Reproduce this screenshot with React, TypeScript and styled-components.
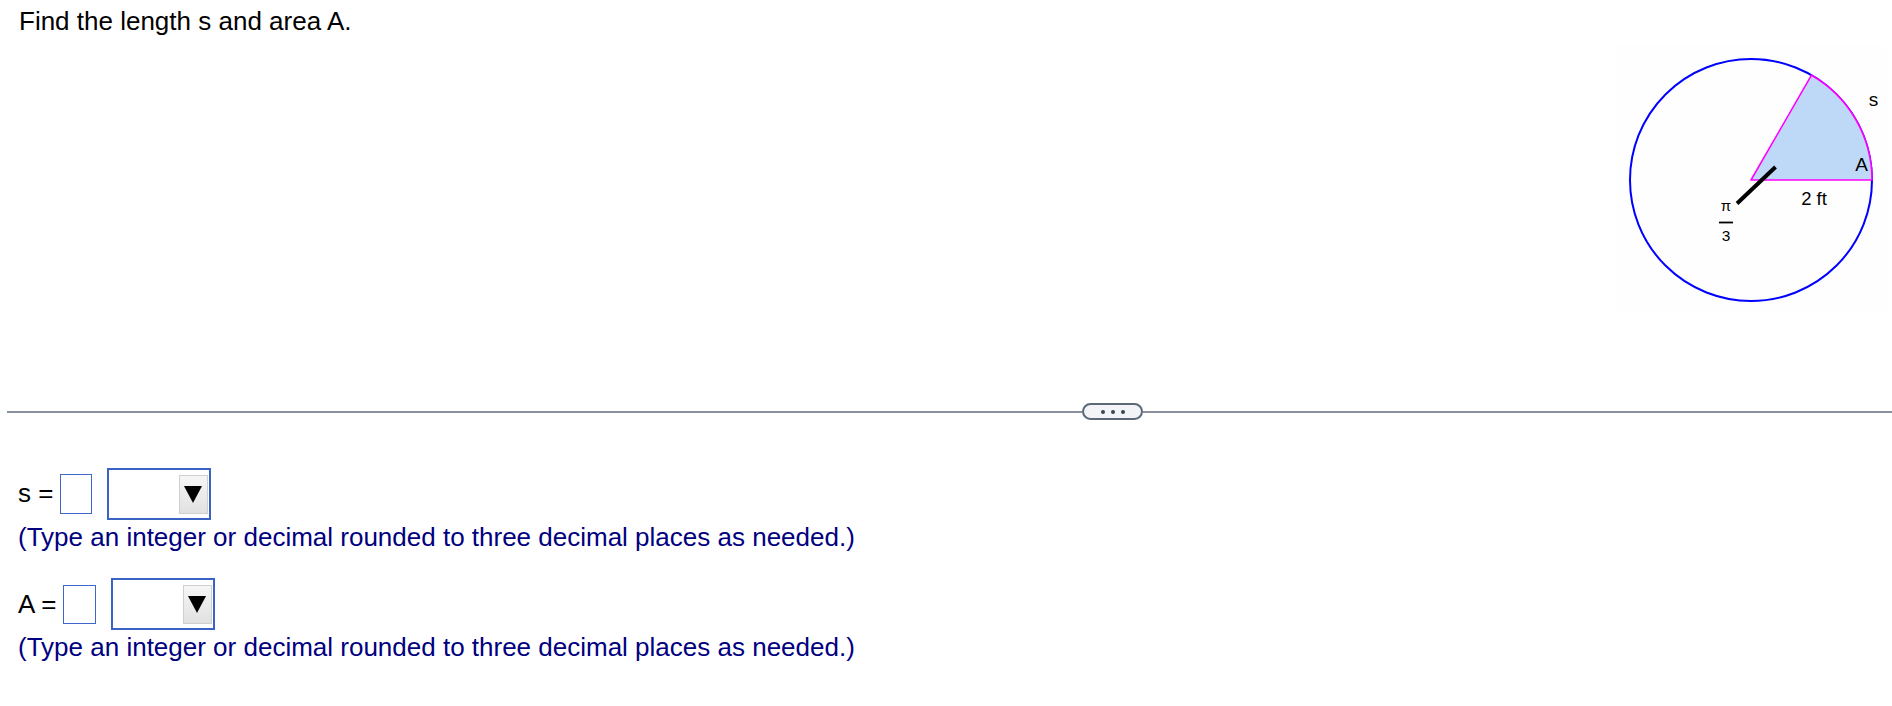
import styled, { createGlobalStyle } from 'styled-components';

const GlobalStyle = createGlobalStyle`
  body {
    margin: 0;
    background: #ffffff;
    font-family: 'Liberation Sans', Arial, sans-serif;
    font-size: 26px;
    color: #000000;
  }
`;

const answers: Array<AnswerRowProps> = [
  { label: 's =', boxWidth: 32 },
  { label: 'A =', boxWidth: 33 },
];

const HINT = '(Type an integer or decimal rounded to three decimal places as needed.)';

function App() {
  return (
    <>
      <GlobalStyle />
      <Page>
        <Top>
          <Prompt>Find the length s and area A.</Prompt>
          <Figure>
            <SectorDiagram />
          </Figure>
        </Top>
        <Divider>
          <Line $width="1075px" />
          <MoreButton aria-label="more">
            <Dot />
            <Dot />
            <Dot />
          </MoreButton>
          <Line />
        </Divider>
        <Answers>
          {answers.map((props, index) => (
            <AnswerRow {...props} key={index} />
          ))}
        </Answers>
      </Page>
    </>
  );
}

function SectorDiagram() {
  // centre (136,135), radius 121, angle pi/3
  return (
    <svg width="272" height="268" viewBox="0 0 272 268">
      <circle cx="136" cy="135" r="121" fill="none" stroke="#0000ff" strokeWidth="2" />
      <path
        d="M136 135 L257 135 A121 121 0 0 0 196.5 30.2 Z"
        fill="#bed8f8"
        stroke="#ff00ff"
        strokeWidth="1.6"
        strokeLinejoin="round"
      />
      <line x1="122" y1="158.5" x2="160.5" y2="122" stroke="#000000" strokeWidth="4" />
      <Label x="258.5" y="60.5" fontSize="19">s</Label>
      <Label x="246.5" y="125.5" fontSize="19">A</Label>
      <Label x="199" y="160" fontSize="18.5">2 ft</Label>
      <Label x="111" y="165.5" fontSize="15">π</Label>
      <line x1="104" y1="177.5" x2="118" y2="177.5" stroke="#000000" strokeWidth="1.8" />
      <Label x="111" y="196" fontSize="15.4">3</Label>
    </svg>
  );
}

interface AnswerRowProps {
  label: string;
  boxWidth: number;
}

function AnswerRow({ label, boxWidth }: AnswerRowProps) {
  return (
    <Answer>
      <Row>
        <RowLabel>{label}</RowLabel>
        <InputBox $width={boxWidth} />
        <Select>
          <SelectButton>
            <Arrow />
          </SelectButton>
        </Select>
      </Row>
      <Hint>{HINT}</Hint>
    </Answer>
  );
}

const Page = styled.div`
  width: 1892px;
  min-height: 706px;
`;

const Top = styled.div`
  display: flex;
  justify-content: space-between;
  align-items: flex-start;
  height: 403px;
`;

const Prompt = styled.div`
  padding: 7px 0 0 19px;
  line-height: 29.4px;
`;

const Figure = styled.div`
  margin: 45px 5px 0 0;
  width: 272px;
  height: 268px;
  background: #fefefe;
  line-height: 0;
`;

const Label = styled.text`
  font-family: 'Liberation Sans', Arial, sans-serif;
  fill: #000000;
  text-anchor: middle;
`;

const Divider = styled.div`
  display: flex;
  align-items: center;
  height: 17px;
  padding-left: 7px;
`;

const Line = styled.div<{ $width?: string }>`
  height: 2px;
  background: #8a919c;
  flex: ${(p) => (p.$width ? `0 0 ${p.$width}` : '1')};
`;

const MoreButton = styled.div`
  box-sizing: border-box;
  width: 61px;
  height: 17px;
  border: 2px solid #5b6878;
  border-radius: 9px;
  background: #f2f4f7;
  display: flex;
  align-items: center;
  justify-content: center;
  gap: 6px;
`;

const Dot = styled.span`
  width: 4px;
  height: 4px;
  border-radius: 50%;
  background: #3c4650;
`;

const Answers = styled.div`
  padding: 48px 0 0 18px;
  display: flex;
  flex-direction: column;
  gap: 26px;
`;

const Answer = styled.div`
  display: flex;
  flex-direction: column;
`;

const Row = styled.div`
  display: flex;
  align-items: center;
  height: 52px;
`;

const RowLabel = styled.span`
  line-height: 29.4px;
  margin-right: 7px;
`;

const InputBox = styled.div<{ $width: number }>`
  box-sizing: border-box;
  width: ${(p) => p.$width}px;
  height: 39.5px;
  border: 1.5px solid #3f67c8;
  background: #ffffff;
  margin-right: 14.5px;
`;

const Select = styled.div`
  box-sizing: border-box;
  width: 104px;
  height: 52px;
  border: 2px solid #3b63c6;
  background: #ffffff;
  display: flex;
  align-items: center;
  justify-content: flex-end;
  padding-right: 1px;
`;

const SelectButton = styled.div`
  box-sizing: border-box;
  width: 29px;
  height: 39px;
  border: 1px solid #cfcfcf;
  background: linear-gradient(#f6f6f6, #e1e1e1);
  display: flex;
  align-items: center;
  justify-content: center;
`;

const Arrow = styled.span`
  width: 0;
  height: 0;
  border-left: 9px solid transparent;
  border-right: 9px solid transparent;
  border-top: 17px solid #000000;
`;

const Hint = styled.div`
  color: #000080;
  line-height: 29.4px;
  margin-top: 3px;
`;

export default App;
